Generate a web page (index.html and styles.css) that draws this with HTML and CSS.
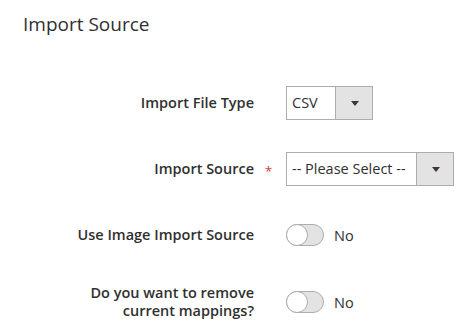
FILE: index.html
```html
<!DOCTYPE html>
<html lang="en">
<head>
  <meta charset="UTF-8">
  <title>Import Source</title>
  <link rel="stylesheet" href="styles.css">
</head>
<body>
  <div class="fieldset">
    <div class="legend">Import Source</div>

    <div class="fields">
      <div class="field">
        <label class="label">Import File Type</label>
        <span class="mark"></span>
        <div class="select select-short">
          <span class="select-value">CSV</span>
          <span class="select-btn"><span class="arrow"></span></span>
        </div>
      </div>

      <div class="field">
        <label class="label">Import Source</label>
        <span class="mark">*</span>
        <div class="select select-long">
          <span class="select-value">-- Please Select --</span>
          <span class="select-btn"><span class="arrow"></span></span>
        </div>
      </div>

      <div class="field">
        <label class="label">Use Image Import Source</label>
        <span class="mark"></span>
        <div class="switch">
          <span class="toggle"><span class="knob"></span></span>
          <span class="switch-text">No</span>
        </div>
      </div>

      <div class="field">
        <label class="label">Do you want to remove<br>current mappings?</label>
        <span class="mark"></span>
        <div class="switch">
          <span class="toggle"><span class="knob"></span></span>
          <span class="switch-text">No</span>
        </div>
      </div>
    </div>
  </div>
</body>
</html>
```

FILE: styles.css
```css
body {
  margin: 0;
  background: #fff;
  font-family: 'Open Sans', 'Liberation Sans', sans-serif;
  color: #303030;
}
.fieldset {
  padding-top: 12px;
}
.legend {
  padding-left: 23px;
  font-size: 19px;
  line-height: 24px;
  font-weight: 400;
  color: #303030;
}
.fields {
  margin-top: 50px;
  display: flex;
  flex-direction: column;
  gap: 32px;
}
.field {
  display: grid;
  grid-template-columns: 254px 32px auto;
  align-items: center;
  min-height: 34px;
}
.label {
  text-align: right;
  font-size: 14.5px;
  line-height: 18px;
  font-weight: 600;
  color: #303030;
}
.mark {
  text-align: center;
  color: #d23a3a;
  font-size: 13px;
  padding-top: 4px;
  padding-right: 3px;
}
.select {
  display: flex;
  height: 34px;
  box-sizing: border-box;
  border: 1px solid #adadad;
  background: #fff;
  font-size: 14.5px;
}
.select-short {
  width: 87px;
}
.select-long {
  width: 168px;
}
.select-value {
  flex: 1;
  padding-left: 5px;
  line-height: 32px;
  color: #303030;
  white-space: nowrap;
}
.select-btn {
  width: 36px;
  border-left: 1px solid #adadad;
  background: #e3e3e3;
  display: flex;
  align-items: center;
  justify-content: center;
}
.arrow {
  width: 0;
  height: 0;
  border-left: 4px solid transparent;
  border-right: 4px solid transparent;
  border-top: 5px solid #41362f;
  margin-left: 2px;
}
.switch {
  display: flex;
  align-items: center;
}
.toggle {
  width: 38px;
  height: 22px;
  box-sizing: border-box;
  border: 1px solid #adadad;
  border-radius: 12px;
  background: #e3e3e3;
  position: relative;
}
.knob {
  position: absolute;
  left: -1px;
  top: -1px;
  width: 22px;
  height: 22px;
  box-sizing: border-box;
  border: 1px solid #adadad;
  border-radius: 50%;
  background: #fff;
}
.switch-text {
  margin-left: 10px;
  font-size: 14.5px;
  color: #303030;
}
```
